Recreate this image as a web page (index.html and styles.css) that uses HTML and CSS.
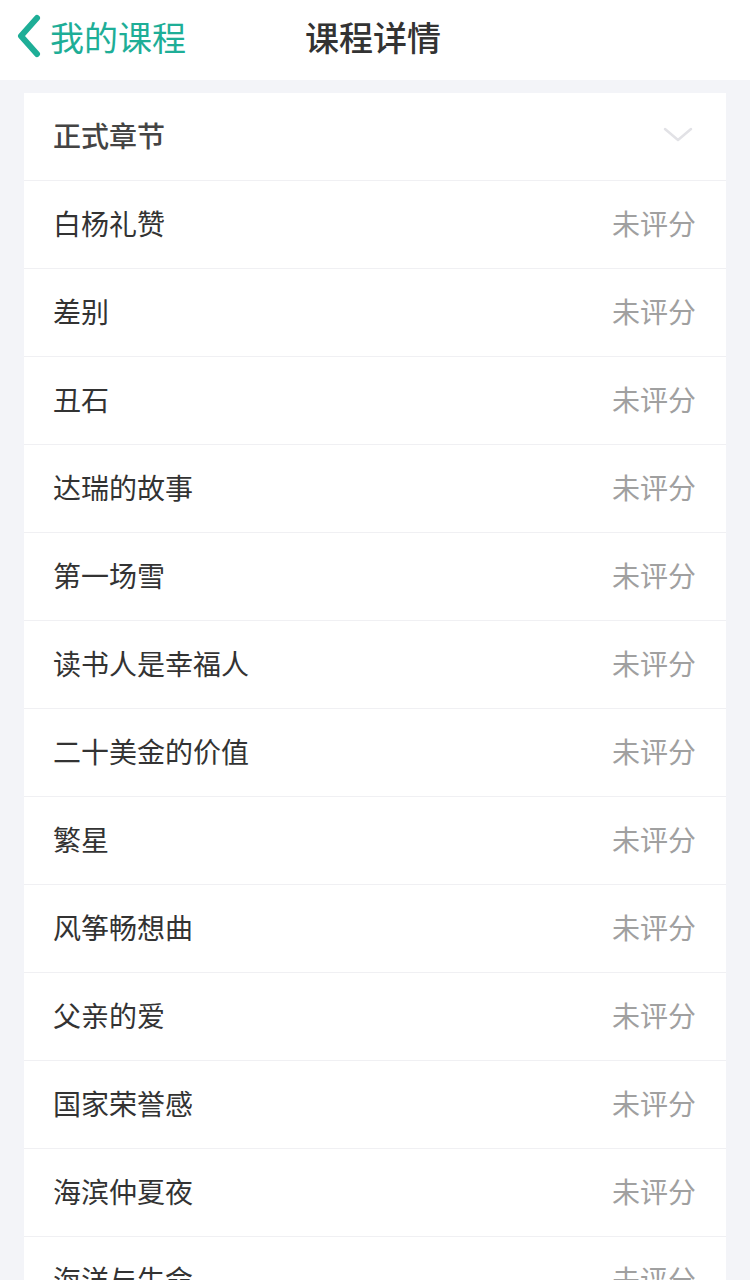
FILE: index.html
```html
<!DOCTYPE html>
<html lang="zh-CN">
<head>
    <meta charset="UTF-8">
    <meta name="viewport" content="width=device-width, initial-scale=1.0">
    <title>课程详情</title>
    <link rel="stylesheet" href="styles.css">
</head>
<body>
    <!-- Top navigation bar -->
    <div class="nav-bar">
        <a class="back-link" href="#">
            <svg class="back-icon" width="26" height="44" viewBox="0 0 26 44">
                <path d="M21 4 L5 22 L21 40" fill="none" stroke="#1eae97" stroke-width="6" stroke-linecap="round" stroke-linejoin="round"/>
            </svg>
            <span>我的课程</span>
        </a>
        <h1 class="nav-title">课程详情</h1>
    </div>

    <div class="content">
        <div class="chapter-card">
            <div class="chapter-header">
                <span class="chapter-title">正式章节</span>
                <svg class="toggle-icon" width="30" height="16" viewBox="0 0 30 16">
                    <path d="M2 2 L15 13 L28 2" fill="none" stroke="#e2e2e6" stroke-width="2.5" stroke-linecap="round" stroke-linejoin="round"/>
                </svg>
            </div>
            <div class="lesson-row"><span class="lesson-name">白杨礼赞</span><span class="lesson-score">未评分</span></div>
            <div class="lesson-row"><span class="lesson-name">差别</span><span class="lesson-score">未评分</span></div>
            <div class="lesson-row"><span class="lesson-name">丑石</span><span class="lesson-score">未评分</span></div>
            <div class="lesson-row"><span class="lesson-name">达瑞的故事</span><span class="lesson-score">未评分</span></div>
            <div class="lesson-row"><span class="lesson-name">第一场雪</span><span class="lesson-score">未评分</span></div>
            <div class="lesson-row"><span class="lesson-name">读书人是幸福人</span><span class="lesson-score">未评分</span></div>
            <div class="lesson-row"><span class="lesson-name">二十美金的价值</span><span class="lesson-score">未评分</span></div>
            <div class="lesson-row"><span class="lesson-name">繁星</span><span class="lesson-score">未评分</span></div>
            <div class="lesson-row"><span class="lesson-name">风筝畅想曲</span><span class="lesson-score">未评分</span></div>
            <div class="lesson-row"><span class="lesson-name">父亲的爱</span><span class="lesson-score">未评分</span></div>
            <div class="lesson-row"><span class="lesson-name">国家荣誉感</span><span class="lesson-score">未评分</span></div>
            <div class="lesson-row"><span class="lesson-name">海滨仲夏夜</span><span class="lesson-score">未评分</span></div>
            <div class="lesson-row"><span class="lesson-name">海洋与生命</span><span class="lesson-score">未评分</span></div>
        </div>
    </div>
</body>
</html>
```

FILE: styles.css
```css
/* Page base */
body {
    margin: 0;
    font-family: 'Noto Sans CJK SC', 'Noto Sans', sans-serif;
    background-color: #f3f4f8;
    color: #333;
}

/* Navigation bar */
.nav-bar {
    height: 80px;
    box-sizing: border-box;
    padding-bottom: 8px;
    background-color: #fff;
    display: flex;
    align-items: center;
}
.back-link {
    display: flex;
    align-items: center;
    padding-left: 16px;
    color: #1eae97;
    text-decoration: none;
    font-size: 34px;
    gap: 8px;
}
.back-icon {
    flex-shrink: 0;
}
.nav-title {
    margin: 0 0 0 119px;
    font-size: 34px;
    font-weight: 500;
    color: #333;
}

/* Content area */
.content {
    padding: 13px 24px 0;
}
.chapter-card {
    background-color: #fff;
}

/* Chapter header row */
.chapter-header {
    height: 88px;
    display: flex;
    align-items: center;
    justify-content: space-between;
    padding: 0 33px 3px 29px;
    border-bottom: 1px solid #f0f0f3;
    box-sizing: border-box;
}
.chapter-title {
    font-size: 28px;
    font-weight: 500;
    color: #444;
}

/* Lesson rows */
.lesson-row {
    height: 88px;
    display: flex;
    align-items: center;
    justify-content: space-between;
    padding: 0 30px 3px 29px;
    border-bottom: 1px solid #f0f0f3;
    box-sizing: border-box;
}
.lesson-name {
    font-size: 28px;
    color: #333;
}
.lesson-score {
    font-size: 28px;
    color: #a0a0a0;
}
```
